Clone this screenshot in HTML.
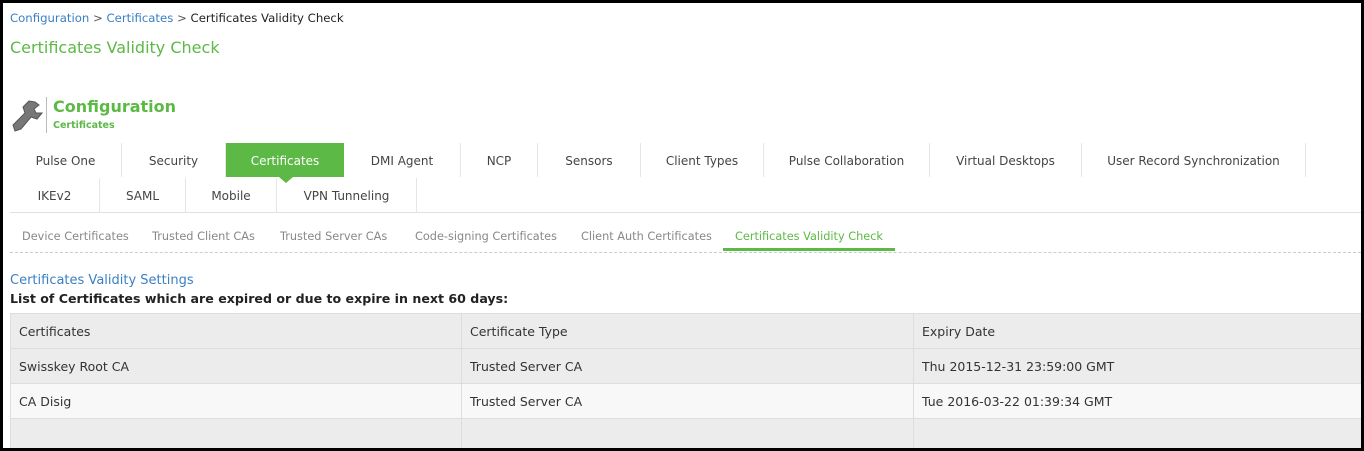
<!DOCTYPE html>
<html><head><meta charset="utf-8"><style>
*{margin:0;padding:0;box-sizing:border-box}
body{width:1364px;height:451px;background:#000;position:relative;overflow:hidden;font-family:"DejaVu Sans","Liberation Sans",sans-serif;font-size:12px;color:#333}
#pg{position:absolute;left:3px;top:3px;width:1358px;height:445px;background:#fff;overflow:hidden}
.a{position:absolute;white-space:nowrap}
.tab{position:absolute;height:34px;line-height:36px;text-align:center;color:#444;font-size:12px;border-right:1px solid #e6e6e6}
.sub{position:absolute;top:227px;color:#888;font-size:11.3px}
td{height:35px;border-bottom:1px solid #ddd;border-right:1px solid #ddd;padding-left:8px;padding-top:1px;font-size:12.5px;color:#333}
</style></head><body><div id="pg">
<div class="a" style="left:7px;top:8px;font-size:11.7px;color:#3a7fc4">Configuration <span style="color:#555">&gt;</span> Certificates <span style="color:#555">&gt;</span> <span style="color:#222">Certificates Validity Check</span></div>
<div class="a" style="left:7px;top:35px;font-size:16px;color:#5cb946">Certificates Validity Check</div>
<svg class="a" style="left:6px;top:96px" width="34" height="34" viewBox="0 0 34 34"><path d="M20 2 L14 8 L16 14 L4 26 L6 32 L12 30 L22 18 L28 20 L33 14 L27 14 L25 10 L30 6 L26 3 Z" fill="#777" stroke="#555" stroke-width="1"/></svg>
<div class="a" style="left:43px;top:94px;width:1px;height:36px;background:#bbb"></div>
<div class="a" style="left:50px;top:94px;font-size:16px;font-weight:bold;color:#5cb946">Configuration</div>
<div class="a" style="left:50px;top:117px;font-size:9.5px;font-weight:bold;color:#5cb946">Certificates</div>
<div class="tab" style="left:7px;top:140px;width:112px">Pulse One</div>
<div class="tab" style="left:119px;top:140px;width:104px">Security</div>
<div class="tab" style="left:223px;top:140px;width:118px;background:#5cb946;color:#fff;border:none">Certificates</div>
<div class="a" style="left:276px;top:174px;width:0;height:0;border-left:7px solid transparent;border-right:7px solid transparent;border-top:6px solid #5cb946"></div>
<div class="tab" style="left:341px;top:140px;width:117px">DMI Agent</div>
<div class="tab" style="left:458px;top:140px;width:77px">NCP</div>
<div class="tab" style="left:535px;top:140px;width:103px">Sensors</div>
<div class="tab" style="left:638px;top:140px;width:123px">Client Types</div>
<div class="tab" style="left:761px;top:140px;width:166px">Pulse Collaboration</div>
<div class="tab" style="left:927px;top:140px;width:152px">Virtual Desktops</div>
<div class="tab" style="left:1079px;top:140px;width:224px">User Record Synchronization</div>
<div class="tab" style="left:7px;top:175px;width:90px">IKEv2</div>
<div class="tab" style="left:97px;top:175px;width:86px">SAML</div>
<div class="tab" style="left:183px;top:175px;width:91px">Mobile</div>
<div class="tab" style="left:274px;top:175px;width:140px">VPN Tunneling</div>
<div class="a" style="left:7px;top:209px;width:1351px;height:1px;background:#e0e0e0"></div>
<div class="sub" style="left:19px">Device Certificates</div>
<div class="sub" style="left:149px">Trusted Client CAs</div>
<div class="sub" style="left:277px">Trusted Server CAs</div>
<div class="sub" style="left:412px">Code-signing Certificates</div>
<div class="sub" style="left:578px">Client Auth Certificates</div>
<div class="sub" style="left:732px;color:#5cb946">Certificates Validity Check</div>
<div class="a" style="left:720px;top:245px;width:172px;height:3px;background:#5cb946"></div>
<div class="a" style="left:7px;top:249px;width:1351px;border-top:1px dashed #ccc"></div>
<div class="a" style="left:7px;top:270px;font-size:13px;color:#3a7fc4">Certificates Validity Settings</div>
<div class="a" style="left:7px;top:288px;font-size:12.6px;font-weight:bold;color:#222">List of Certificates which are expired or due to expire in next 60 days:</div>
<table class="a" style="left:7px;top:310px;width:1360px;border-collapse:collapse;border-top:1px solid #ddd;border-left:1px solid #ddd">
<tr style="background:#ececec"><td style="width:451px">Certificates</td><td style="width:452px">Certificate Type</td><td>Expiry Date</td></tr>
<tr style="background:#ececec"><td>Swisskey Root CA</td><td>Trusted Server CA</td><td>Thu 2015-12-31 23:59:00 GMT</td></tr>
<tr style="background:#f8f8f8"><td>CA Disig</td><td>Trusted Server CA</td><td>Tue 2016-03-22 01:39:34 GMT</td></tr>
<tr style="background:#ececec"><td></td><td></td><td></td></tr>
</table>
</div></body></html>
